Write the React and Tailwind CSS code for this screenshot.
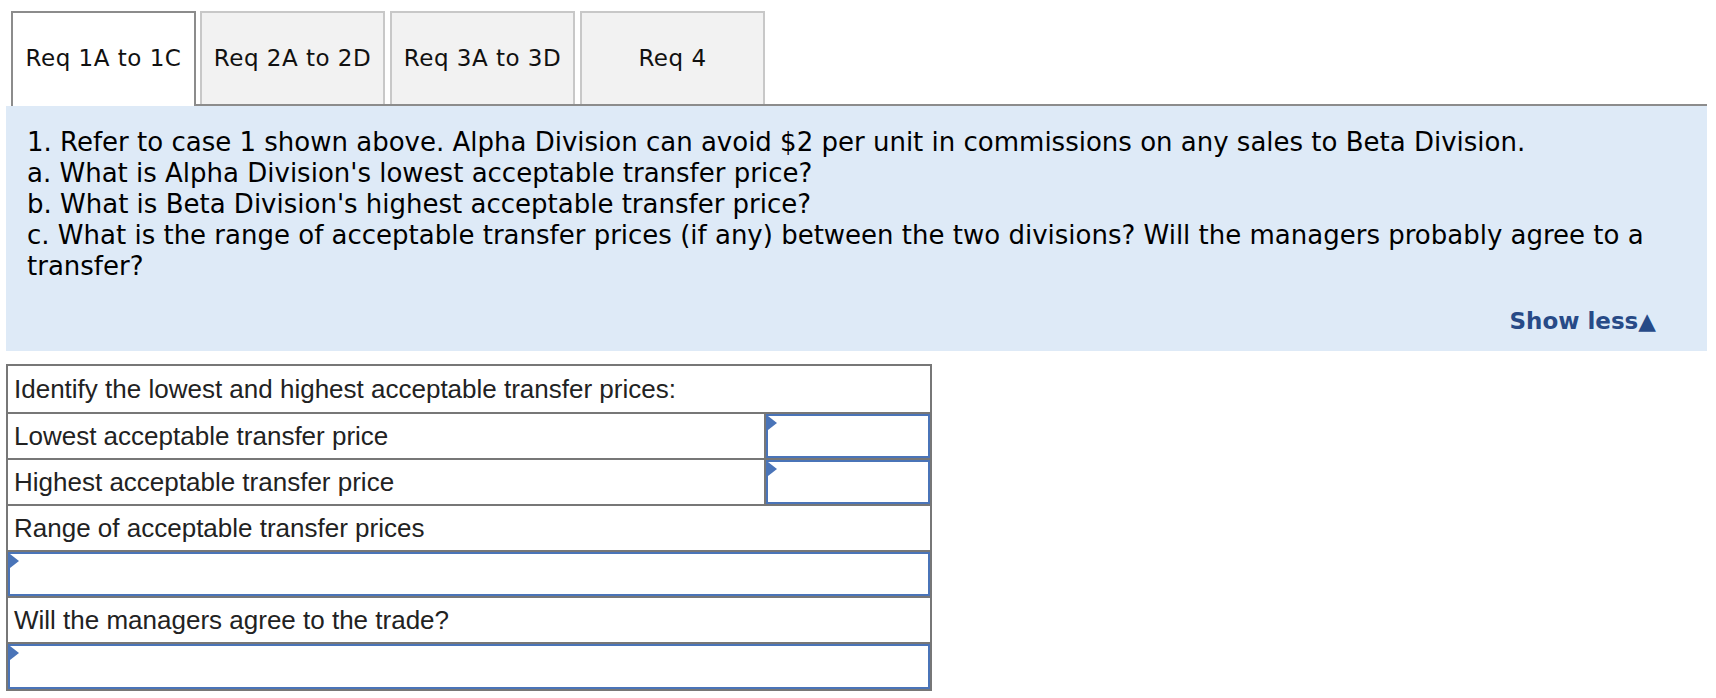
const verdana = { fontFamily: "Verdana, 'DejaVu Sans', sans-serif" };

function Tab({ label, active }) {
  if (active) {
    return (
      <div className="w-[185px] h-[95px] flex items-center justify-center bg-white border-2 border-b-0 border-[#8c8c8c] text-[23px] tracking-[0.5px] text-[#111] shrink-0">
        <span className="pb-[2px]">{label}</span>
      </div>
    );
  }
  return (
    <div className="w-[185px] h-[93px] flex items-center justify-center bg-[#f2f2f2] border-2 border-b-0 border-[#c8c8c8] text-[23px] tracking-[0.5px] text-[#111] shrink-0">
      <span>{label}</span>
    </div>
  );
}

function AnswerBox() {
  return (
    <div className="relative w-full h-full border-2 border-[#4a74b8] bg-white">
      <div className="absolute top-0 left-0 w-0 h-0 border-y-[7px] border-y-transparent border-l-[9px] border-l-[#4a74b8]" />
    </div>
  );
}

function LabelRow({ children, tall }) {
  return (
    <div className={`${tall ? "h-[46px]" : "h-[44px]"} flex items-center pl-[6px] text-[26px] text-[#222]`}>
      {children}
    </div>
  );
}

function InputRow({ label }) {
  return (
    <div className="h-[46px] flex border-t-2 border-[#777]">
      <div className="flex-1 flex items-center pl-[6px] border-r-2 border-[#777] text-[26px] text-[#222]">
        {label}
      </div>
      <div className="w-[164px] h-full">
        <AnswerBox />
      </div>
    </div>
  );
}

export default function App() {
  return (
    <div className="w-full h-[698px] bg-white px-[6px] pt-[11px]">
      <div className="flex items-end" style={verdana}>
        <div className="pl-[5px]">
          <Tab label="Req 1A to 1C" active />
        </div>
        <div className="flex-1 flex items-end gap-[5px] pl-[4px] border-b-2 border-[#8c8c8c] mr-[3px]">
          <Tab label="Req 2A to 2D" />
          <Tab label="Req 3A to 3D" />
          <Tab label="Req 4" />
          <div className="flex-1" />
        </div>
      </div>

      <div className="h-[245px] w-[1701px] bg-[#deeaf7] pt-[21px] pl-[21px] pr-[51px] flex flex-col text-black" style={verdana}>
        <div className="text-[26px] leading-[31px]">
          <div>1. Refer to case 1 shown above. Alpha Division can avoid $2 per unit in commissions on any sales to Beta Division.</div>
          <div>a. What is Alpha Division's lowest acceptable transfer price?</div>
          <div>b. What is Beta Division's highest acceptable transfer price?</div>
          <div>
            c. What is the range of acceptable transfer prices (if any) between the two divisions? Will the managers probably agree to a
            <br />
            transfer?
          </div>
        </div>
        <div className="mt-[24px] flex justify-end">
          <span className="text-[23px] font-bold text-[#274a87] leading-[30px]">Show less▲</span>
        </div>
      </div>

      <div className="mt-[13px] w-[926px] border-2 border-[#777]" style={{ fontFamily: "Arial, 'Liberation Sans', sans-serif" }}>
        <LabelRow tall>Identify the lowest and highest acceptable transfer prices:</LabelRow>
        <InputRow label="Lowest acceptable transfer price" />
        <InputRow label="Highest acceptable transfer price" />
        <div className="border-t-2 border-[#777]">
          <LabelRow>Range of acceptable transfer prices</LabelRow>
        </div>
        <div className="h-[46px] border-t-2 border-[#777]">
          <AnswerBox />
        </div>
        <div className="border-t-2 border-[#777]">
          <LabelRow>Will the managers agree to the trade?</LabelRow>
        </div>
        <div className="h-[47px] border-t-2 border-[#777]">
          <AnswerBox />
        </div>
      </div>
    </div>
  );
}
